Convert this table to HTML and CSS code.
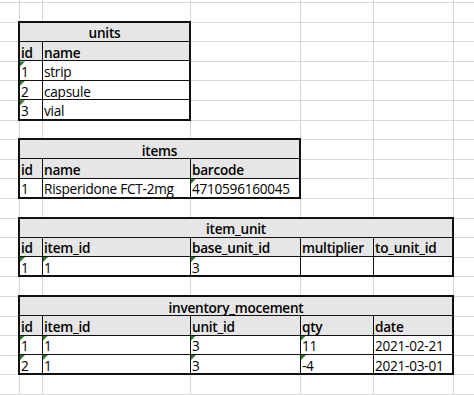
FILE: index.html
```html
<!DOCTYPE html>
<html>
<head>
<meta charset="utf-8">
<link rel="stylesheet" href="styles.css">
</head>
<body>
<div class="sheet">
  <div class="tbl units">
    <div class="title">units</div>
    <div class="c hd">id</div><div class="c hd">name</div>
    <div class="c flag">1</div><div class="c">strip</div>
    <div class="c flag">2</div><div class="c">capsule</div>
    <div class="c flag">3</div><div class="c">vial</div>
  </div>
  <div class="tbl items">
    <div class="title">items</div>
    <div class="c hd">id</div><div class="c hd">name</div><div class="c hd">barcode</div>
    <div class="c">1</div><div class="c">Risperidone FCT-2mg</div><div class="c flag">4710596160045</div>
  </div>
  <div class="tbl itemunit">
    <div class="title">item_unit</div>
    <div class="c hd">id</div><div class="c hd">item_id</div><div class="c hd">base_unit_id</div><div class="c hd">multiplier</div><div class="c hd">to_unit_id</div>
    <div class="c flag">1</div><div class="c flag">1</div><div class="c flag">3</div><div class="c"></div><div class="c"></div>
  </div>
  <div class="tbl inventory">
    <div class="title">inventory_mocement</div>
    <div class="c hd">id</div><div class="c hd">item_id</div><div class="c hd">unit_id</div><div class="c hd">qty</div><div class="c hd">date</div>
    <div class="c flag">1</div><div class="c flag">1</div><div class="c flag">3</div><div class="c flag">11</div><div class="c">2021-02-21</div>
    <div class="c flag">2</div><div class="c flag">1</div><div class="c flag">3</div><div class="c flag">-4</div><div class="c">2021-03-01</div>
  </div>
</div>
</body>
</html>
```
FILE: styles.css
```css
html, body {
  margin: 0;
  padding: 0;
  background: #fff;
}
.sheet {
  width: 474px;
  height: 395px;
  overflow: hidden;
  display: grid;
  grid-template-columns: 19px 23px 148px 110px 73px 80px 1fr;
  grid-template-rows: 2px repeat(20, 19.6px) 1fr;
  font-family: "Open Sans", Lato, sans-serif;
  font-size: 13.6px;
  letter-spacing: -0.25px;
  color: #000;
  background:
    linear-gradient(#d6d6d6, #d6d6d6) 19px 0 / 1px 100% no-repeat,
    linear-gradient(#d6d6d6, #d6d6d6) 42px 0 / 1px 100% no-repeat,
    linear-gradient(#d6d6d6, #d6d6d6) 190px 0 / 1px 100% no-repeat,
    linear-gradient(#d6d6d6, #d6d6d6) 300px 0 / 1px 100% no-repeat,
    linear-gradient(#d6d6d6, #d6d6d6) 373px 0 / 1px 100% no-repeat,
    linear-gradient(#d6d6d6, #d6d6d6) 453px 0 / 1px 100% no-repeat,
    repeating-linear-gradient(to bottom, #d9d9d9 0 1px, transparent 1px 19.6px) 0 2px / 100% 100%,
    #fff;
}
.tbl {
  display: grid;
  gap: 1px;
  background: #111;
  border: 2px solid #111;
  margin: -1px;
}
.units { grid-column: 2 / 4; grid-row: 3 / span 5; grid-template-columns: 22px 1fr; }
.items { grid-column: 2 / 5; grid-row: 9 / span 3; grid-template-columns: 22px 147px 1fr; }
.itemunit { grid-column: 2 / 7; grid-row: 13 / span 3; grid-template-columns: 22px 147px 109px 72px 1fr; }
.inventory { grid-column: 2 / 7; grid-row: 17 / span 4; grid-template-columns: 22px 147px 109px 72px 1fr; }
.title {
  grid-column: 1 / -1;
  background: #e7e6e6;
  font-weight: 600;
  display: flex;
  align-items: flex-end;
  justify-content: center;
  padding-bottom: 1px;
  line-height: 1;
}
.c {
  position: relative;
  background: #fff;
  display: flex;
  align-items: flex-end;
  padding: 0 0 1px 1px;
  line-height: 1;
  white-space: nowrap;
  overflow: hidden;
}
.hd {
  background: #e7e6e6;
  font-weight: 600;
}
.flag::before {
  content: "";
  position: absolute;
  left: 0;
  top: 0;
  width: 5px;
  height: 5px;
  background: #2b7a2f;
  clip-path: polygon(0 0, 100% 0, 0 100%);
}
```
